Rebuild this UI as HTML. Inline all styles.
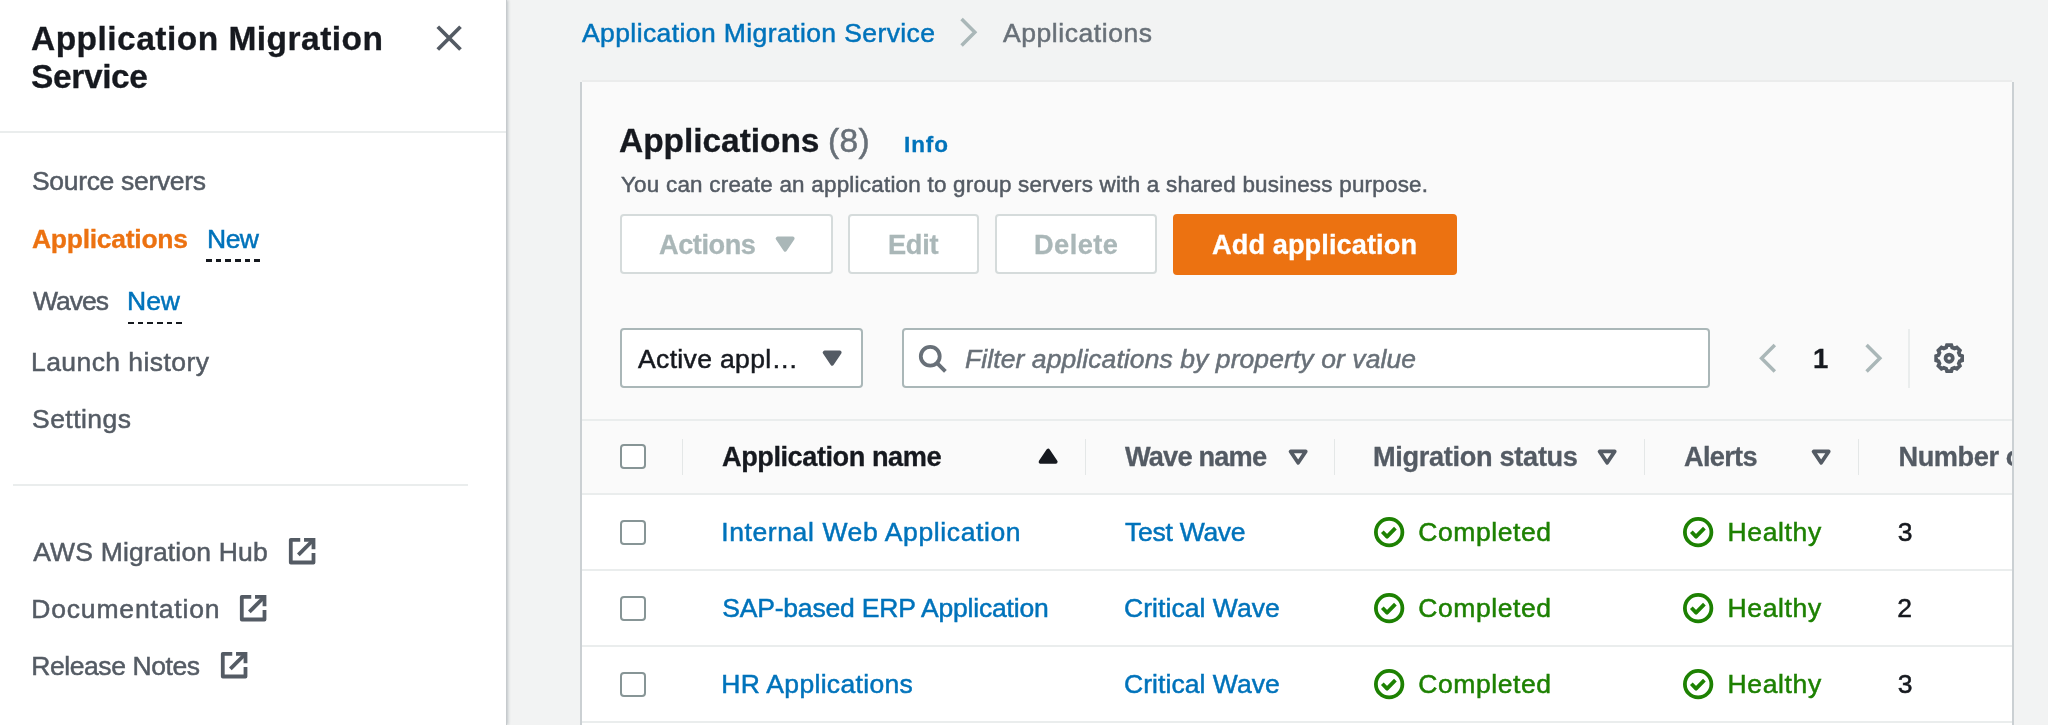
<!DOCTYPE html>
<html lang="en">
<head>
<meta charset="utf-8">
<title>Application Migration Service - Applications</title>
<style>
html,body{margin:0;padding:0}
body{width:2048px;height:725px;overflow:hidden;background:#f2f3f3;position:relative;will-change:transform;font-family:"Liberation Sans",sans-serif}
.t{margin:0;position:absolute;white-space:pre;line-height:1;text-decoration:none;-webkit-text-stroke:0.3px currentColor}
.r{-webkit-text-stroke-width:0.5px}
.abs{position:absolute}
#side{position:absolute;left:0;top:0;width:506px;height:725px;background:#fff;border-right:1px solid #c6cacd;box-shadow:1px 0 3px rgba(0,28,36,.22)}
.hr{position:absolute;background:#eaeded;height:2px}
.dash{position:absolute;height:2.4px;width:54.2px;background:repeating-linear-gradient(90deg,#16191f 0,#16191f 5.7px,transparent 5.7px,transparent 9.68px)}
#card{position:absolute;left:582px;top:81.5px;width:1430px;height:660px;background:#fafafa;box-shadow:-2px 0 0 0 #cbd0d3, 2px 0 0 0 #cbd0d3, 0 -2px 0 0 #ebecec;}
#clip{position:absolute;left:582px;top:81.5px;width:1430px;height:660px;overflow:hidden}
#clip .t{margin-left:-582px;margin-top:-81.5px}
.btn{position:absolute;top:214.2px;height:56px;border:2px solid #d5dbdb;border-radius:4px;background:#fff}
.btn.primary{background:#ec7211;border-color:#ec7211}
.field{position:absolute;top:328.2px;height:55.8px;border:2px solid #aab7b8;border-radius:4px;background:#fff}
.cb{position:absolute;left:620px;width:22px;height:21px;border:2px solid #879596;border-radius:4px;background:#fff}
.sep{position:absolute;top:439px;height:36px;width:1.3px;margin-left:-0.65px;background:#e4e7e7}
.row{position:absolute;left:582px;width:1430px;height:74px;background:#fff;border-bottom:2px solid #eaeded}
svg{position:absolute;overflow:visible}
</style>
</head>
<body>
<nav id="side"></nav>
<div class="hr" style="left:0;top:131px;width:506px"></div>
<svg style="left:433.81px;top:22.66px" width="30.29" height="30.29" viewBox="0 0 16 16" fill="none" stroke="#545b64" stroke-width="2" stroke-linejoin="round" ><path d="M2 2l12 12M14 2L2 14"/></svg>
<div class="dash" style="left:206.4px;top:259.4px"></div>
<div class="dash" style="left:127.8px;top:322.1px"></div>
<div class="hr" style="left:13px;top:484px;width:455px"></div>
<svg style="left:287.06px;top:536.36px" width="30.29" height="30.29" viewBox="0 0 16 16" fill="none" stroke="#545b64" stroke-width="2" stroke-linejoin="round" ><path d="M9 2h5v5" stroke-linejoin="miter"/><path d="M14 2L6 10"/><path d="M7 2H2v12h12V9"/></svg>
<svg style="left:237.76px;top:592.96px" width="30.29" height="30.29" viewBox="0 0 16 16" fill="none" stroke="#545b64" stroke-width="2" stroke-linejoin="round" ><path d="M9 2h5v5" stroke-linejoin="miter"/><path d="M14 2L6 10"/><path d="M7 2H2v12h12V9"/></svg>
<svg style="left:219.16px;top:649.86px" width="30.29" height="30.29" viewBox="0 0 16 16" fill="none" stroke="#545b64" stroke-width="2" stroke-linejoin="round" ><path d="M9 2h5v5" stroke-linejoin="miter"/><path d="M14 2L6 10"/><path d="M7 2H2v12h12V9"/></svg>
<main id="card"></main>
<svg style="left:953.76px;top:16.56px" width="30.29" height="30.29" viewBox="0 0 16 16" fill="none" stroke="#aab7b8" stroke-width="1.85" stroke-linejoin="round" ><path d="M4 1l7 7-7 7" stroke-linejoin="miter"/></svg>

<div class="btn" style="left:620px;width:208.8px"></div>
<svg style="left:770.06px;top:229.06px" width="30.29" height="30.29" viewBox="0 0 16 16" fill="none" stroke="#aab7b8" stroke-width="2" stroke-linejoin="round" ><path d="M4 5h8l-4 6-4-6z" fill="#aab7b8"/></svg>
<div class="btn" style="left:847.8px;width:127.2px"></div>
<div class="btn" style="left:995.3px;width:158px"></div>
<div class="btn primary" style="left:1172.8px;top:214.2px;width:280.2px;height:56.4px"></div>

<div class="field" style="left:620px;width:239.2px"></div>
<svg style="left:816.66px;top:343.06px" width="30.29" height="30.29" viewBox="0 0 16 16" fill="none" stroke="#545b64" stroke-width="2" stroke-linejoin="round" ><path d="M4 5h8l-4 6-4-6z" fill="#545b64"/></svg>
<div class="field" style="left:902px;width:804px"></div>
<svg style="left:917.16px;top:342.86px" width="30.29" height="30.29" viewBox="0 0 16 16" fill="none" stroke="#687078" stroke-width="2" stroke-linejoin="round" ><circle cx="7" cy="7" r="5"/><path d="M10.6 10.6L15 15"/></svg>
<svg style="left:1754.26px;top:342.96px" width="30.29" height="30.29" viewBox="0 0 16 16" fill="none" stroke="#aab7b8" stroke-width="1.85" stroke-linejoin="round" ><path d="M11 1L4 8l7 7" stroke-linejoin="miter"/></svg>
<svg style="left:1858.71px;top:342.96px" width="30.29" height="30.29" viewBox="0 0 16 16" fill="none" stroke="#aab7b8" stroke-width="1.85" stroke-linejoin="round" ><path d="M4 1l7 7-7 7" stroke-linejoin="miter"/></svg>
<div class="abs" style="left:1907.5px;top:329px;width:2px;height:59px;background:#eaeded"></div>
<svg style="left:1933.96px;top:342.76px" width="30.29" height="30.29" viewBox="0 0 16 16" fill="none" stroke="#545b64" stroke-width="2" stroke-linejoin="round" ><path d="M6.39 2.38 L6.85 1.15 L9.15 1.15 L9.61 2.38 L10.84 2.88 L12.04 2.34 L13.66 3.96 L13.12 5.16 L13.62 6.39 L14.85 6.85 L14.85 9.15 L13.62 9.61 L13.12 10.84 L13.66 12.04 L12.04 13.66 L10.84 13.12 L9.61 13.62 L9.15 14.85 L6.85 14.85 L6.39 13.62 L5.16 13.12 L3.96 13.66 L2.34 12.04 L2.88 10.84 L2.38 9.61 L1.15 9.15 L1.15 6.85 L2.38 6.39 L2.88 5.16 L2.34 3.96 L3.96 2.34 L5.16 2.88Z" stroke-linejoin="miter"/><circle cx="8" cy="8" r="1.9"/></svg>

<div class="hr" style="left:582px;top:418.75px;width:1430px"></div>
<div class="hr" style="left:582px;top:492.5px;width:1430px"></div>
<div class="cb" style="top:444px"></div>
<div class="sep" style="left:682.5px"></div>
<div class="sep" style="left:1085.2px"></div>
<div class="sep" style="left:1334.6px"></div>
<div class="sep" style="left:1644.6px"></div>
<div class="sep" style="left:1858.4px"></div>
<svg style="left:1033.06px;top:441.46px" width="30.29" height="30.29" viewBox="0 0 16 16" fill="none" stroke="#16191f" stroke-width="2" stroke-linejoin="round" ><path d="M4 11h8L8 5l-4 6z" fill="#16191f"/></svg>
<svg style="left:1282.76px;top:441.76px" width="30.29" height="30.29" viewBox="0 0 16 16" fill="none" stroke="#545b64" stroke-width="2" stroke-linejoin="round" ><path d="M4 5h8l-4 6-4-6z"/></svg>
<svg style="left:1592.36px;top:441.76px" width="30.29" height="30.29" viewBox="0 0 16 16" fill="none" stroke="#545b64" stroke-width="2" stroke-linejoin="round" ><path d="M4 5h8l-4 6-4-6z"/></svg>
<svg style="left:1806.46px;top:441.76px" width="30.29" height="30.29" viewBox="0 0 16 16" fill="none" stroke="#545b64" stroke-width="2" stroke-linejoin="round" ><path d="M4 5h8l-4 6-4-6z"/></svg>
<div class="row" style="top:494.5px"></div>
<div class="cb" style="top:519.9px"></div>
<svg style="left:1373.66px;top:517.36px" width="30.29" height="30.29" viewBox="0 0 16 16" fill="none" stroke="#1d8102" stroke-width="2" stroke-linejoin="round" ><circle cx="8" cy="8" r="7"/><path d="M4.4 7.8l2.5 2.6 4.4-4.5"/></svg>
<svg style="left:1683.16px;top:517.36px" width="30.29" height="30.29" viewBox="0 0 16 16" fill="none" stroke="#1d8102" stroke-width="2" stroke-linejoin="round" ><circle cx="8" cy="8" r="7"/><path d="M4.4 7.8l2.5 2.6 4.4-4.5"/></svg>
<div class="row" style="top:570.5px"></div>
<div class="cb" style="top:595.9px"></div>
<svg style="left:1373.66px;top:593.36px" width="30.29" height="30.29" viewBox="0 0 16 16" fill="none" stroke="#1d8102" stroke-width="2" stroke-linejoin="round" ><circle cx="8" cy="8" r="7"/><path d="M4.4 7.8l2.5 2.6 4.4-4.5"/></svg>
<svg style="left:1683.16px;top:593.36px" width="30.29" height="30.29" viewBox="0 0 16 16" fill="none" stroke="#1d8102" stroke-width="2" stroke-linejoin="round" ><circle cx="8" cy="8" r="7"/><path d="M4.4 7.8l2.5 2.6 4.4-4.5"/></svg>
<div class="row" style="top:646.5px"></div>
<div class="cb" style="top:671.9px"></div>
<svg style="left:1373.66px;top:669.36px" width="30.29" height="30.29" viewBox="0 0 16 16" fill="none" stroke="#1d8102" stroke-width="2" stroke-linejoin="round" ><circle cx="8" cy="8" r="7"/><path d="M4.4 7.8l2.5 2.6 4.4-4.5"/></svg>
<svg style="left:1683.16px;top:669.36px" width="30.29" height="30.29" viewBox="0 0 16 16" fill="none" stroke="#1d8102" stroke-width="2" stroke-linejoin="round" ><circle cx="8" cy="8" r="7"/><path d="M4.4 7.8l2.5 2.6 4.4-4.5"/></svg>
<div class="row" style="top:722.5px"></div>
<div id="clip"><span class="t" style="left:1898.5px;top:443.13px;font-size:27.2px;font-weight:700;color:#545b64;letter-spacing:-0.45px">Number of servers</span></div>
<h2 class="t" style="left:31.00px;top:21.64px;font-size:33.5px;font-weight:700;font-style:normal;color:#16191f;letter-spacing:0.478px">Application Migration</h2>
<h2 class="t" style="left:31.00px;top:59.64px;font-size:33.5px;font-weight:700;font-style:normal;color:#16191f;letter-spacing:-0.370px">Service</h2>
<a class="t r" style="left:32.00px;top:167.57px;font-size:26.5px;font-weight:400;font-style:normal;color:#545b64;letter-spacing:-0.323px">Source servers</a>
<a class="t" style="left:32.00px;top:225.57px;font-size:26.5px;font-weight:700;font-style:normal;color:#ec7211;letter-spacing:-0.274px">Applications</a>
<a class="t r" style="left:207.00px;top:225.57px;font-size:26.5px;font-weight:400;font-style:normal;color:#0073bb;letter-spacing:-0.508px">New</a>
<a class="t r" style="left:33.00px;top:288.07px;font-size:26.5px;font-weight:400;font-style:normal;color:#545b64;letter-spacing:-1.004px">Waves</a>
<a class="t r" style="left:127.00px;top:288.07px;font-size:26.5px;font-weight:400;font-style:normal;color:#0073bb;letter-spacing:-0.008px">New</a>
<a class="t r" style="left:31.00px;top:349.07px;font-size:26.5px;font-weight:400;font-style:normal;color:#545b64;letter-spacing:0.434px">Launch history</a>
<a class="t r" style="left:32.00px;top:406.07px;font-size:26.5px;font-weight:400;font-style:normal;color:#545b64;letter-spacing:0.462px">Settings</a>
<a class="t r" style="left:33.20px;top:538.57px;font-size:26.5px;font-weight:400;font-style:normal;color:#545b64;letter-spacing:0.180px">AWS Migration Hub</a>
<a class="t r" style="left:31.20px;top:596.07px;font-size:26.5px;font-weight:400;font-style:normal;color:#545b64;letter-spacing:0.846px">Documentation</a>
<a class="t r" style="left:31.20px;top:652.77px;font-size:26.5px;font-weight:400;font-style:normal;color:#545b64;letter-spacing:-0.419px">Release Notes</a>
<a class="t r" style="left:582.00px;top:19.57px;font-size:26.5px;font-weight:400;font-style:normal;color:#0073bb;letter-spacing:0.403px">Application Migration Service</a>
<span class="t r" style="left:1003.00px;top:19.57px;font-size:26.5px;font-weight:400;font-style:normal;color:#687078;letter-spacing:0.555px">Applications</span>
<h2 class="t" style="left:619.00px;top:124.39px;font-size:33.5px;font-weight:700;font-style:normal;color:#16191f;letter-spacing:-0.048px">Applications</h2>
<span class="t r" style="left:828.00px;top:124.39px;font-size:33.5px;font-weight:400;font-style:normal;color:#687078;letter-spacing:0.398px">(8)</span>
<a class="t" style="left:904.00px;top:134.20px;font-size:22.5px;font-weight:700;font-style:normal;color:#0073bb;letter-spacing:0.922px">Info</a>
<span class="t r" style="left:621.00px;top:174.29px;font-size:22.4px;font-weight:400;font-style:normal;color:#545b64;letter-spacing:0.243px">You can create an application to group servers with a shared business purpose.</span>
<span class="t" style="left:659.00px;top:231.48px;font-size:27.2px;font-weight:700;font-style:normal;color:#aab7b8;letter-spacing:-0.451px">Actions</span>
<span class="t" style="left:888.00px;top:231.48px;font-size:27.2px;font-weight:700;font-style:normal;color:#aab7b8;letter-spacing:-0.286px">Edit</span>
<span class="t" style="left:1034.00px;top:231.48px;font-size:27.2px;font-weight:700;font-style:normal;color:#aab7b8;letter-spacing:0.478px">Delete</span>
<span class="t" style="left:1212.00px;top:231.48px;font-size:27.2px;font-weight:700;font-style:normal;color:#ffffff;letter-spacing:0.078px">Add application</span>
<span class="t r" style="left:638.00px;top:345.82px;font-size:26.5px;font-weight:400;font-style:normal;color:#16191f;letter-spacing:0.351px">Active appl…</span>
<span class="t r" style="left:965.00px;top:346.32px;font-size:26.5px;font-weight:400;font-style:italic;color:#687078;letter-spacing:0.083px">Filter applications by property or value</span>
<span class="t" style="left:1813.10px;top:345.17px;font-size:27.5px;font-weight:700;font-style:normal;color:#16191f;letter-spacing:0.000px">1</span>
<span class="t" style="left:722.00px;top:443.13px;font-size:27.2px;font-weight:700;font-style:normal;color:#16191f;letter-spacing:-0.473px">Application name</span>
<span class="t" style="left:1125.00px;top:443.13px;font-size:27.2px;font-weight:700;font-style:normal;color:#545b64;letter-spacing:-0.824px">Wave name</span>
<span class="t" style="left:1373.00px;top:443.13px;font-size:27.2px;font-weight:700;font-style:normal;color:#545b64;letter-spacing:-0.331px">Migration status</span>
<span class="t" style="left:1684.00px;top:443.13px;font-size:27.2px;font-weight:700;font-style:normal;color:#545b64;letter-spacing:-0.712px">Alerts</span>
<a class="t r" style="left:721.20px;top:519.12px;font-size:26.5px;font-weight:400;font-style:normal;color:#0073bb;letter-spacing:0.612px">Internal Web Application</a>
<a class="t r" style="left:1125.00px;top:519.12px;font-size:26.5px;font-weight:400;font-style:normal;color:#0073bb;letter-spacing:-0.265px">Test Wave</a>
<span class="t r" style="left:1418.20px;top:519.12px;font-size:26.5px;font-weight:400;font-style:normal;color:#1d8102;letter-spacing:0.580px">Completed</span>
<span class="t r" style="left:1727.60px;top:519.12px;font-size:26.5px;font-weight:400;font-style:normal;color:#1d8102;letter-spacing:0.623px">Healthy</span>
<span class="t r" style="left:1897.85px;top:519.12px;font-size:26.5px;font-weight:400;font-style:normal;color:#16191f;letter-spacing:0.000px">3</span>
<a class="t r" style="left:722.20px;top:595.12px;font-size:26.5px;font-weight:400;font-style:normal;color:#0073bb;letter-spacing:-0.182px">SAP-based ERP Application</a>
<a class="t r" style="left:1124.00px;top:595.12px;font-size:26.5px;font-weight:400;font-style:normal;color:#0073bb;letter-spacing:0.059px">Critical Wave</a>
<span class="t r" style="left:1418.20px;top:595.12px;font-size:26.5px;font-weight:400;font-style:normal;color:#1d8102;letter-spacing:0.580px">Completed</span>
<span class="t r" style="left:1727.60px;top:595.12px;font-size:26.5px;font-weight:400;font-style:normal;color:#1d8102;letter-spacing:0.623px">Healthy</span>
<span class="t r" style="left:1897.35px;top:595.12px;font-size:26.5px;font-weight:400;font-style:normal;color:#16191f;letter-spacing:0.000px">2</span>
<a class="t r" style="left:721.20px;top:671.12px;font-size:26.5px;font-weight:400;font-style:normal;color:#0073bb;letter-spacing:0.323px">HR Applications</a>
<a class="t r" style="left:1124.00px;top:671.12px;font-size:26.5px;font-weight:400;font-style:normal;color:#0073bb;letter-spacing:0.059px">Critical Wave</a>
<span class="t r" style="left:1418.20px;top:671.12px;font-size:26.5px;font-weight:400;font-style:normal;color:#1d8102;letter-spacing:0.580px">Completed</span>
<span class="t r" style="left:1727.60px;top:671.12px;font-size:26.5px;font-weight:400;font-style:normal;color:#1d8102;letter-spacing:0.623px">Healthy</span>
<span class="t r" style="left:1897.85px;top:671.12px;font-size:26.5px;font-weight:400;font-style:normal;color:#16191f;letter-spacing:0.000px">3</span>
</body>
</html>
